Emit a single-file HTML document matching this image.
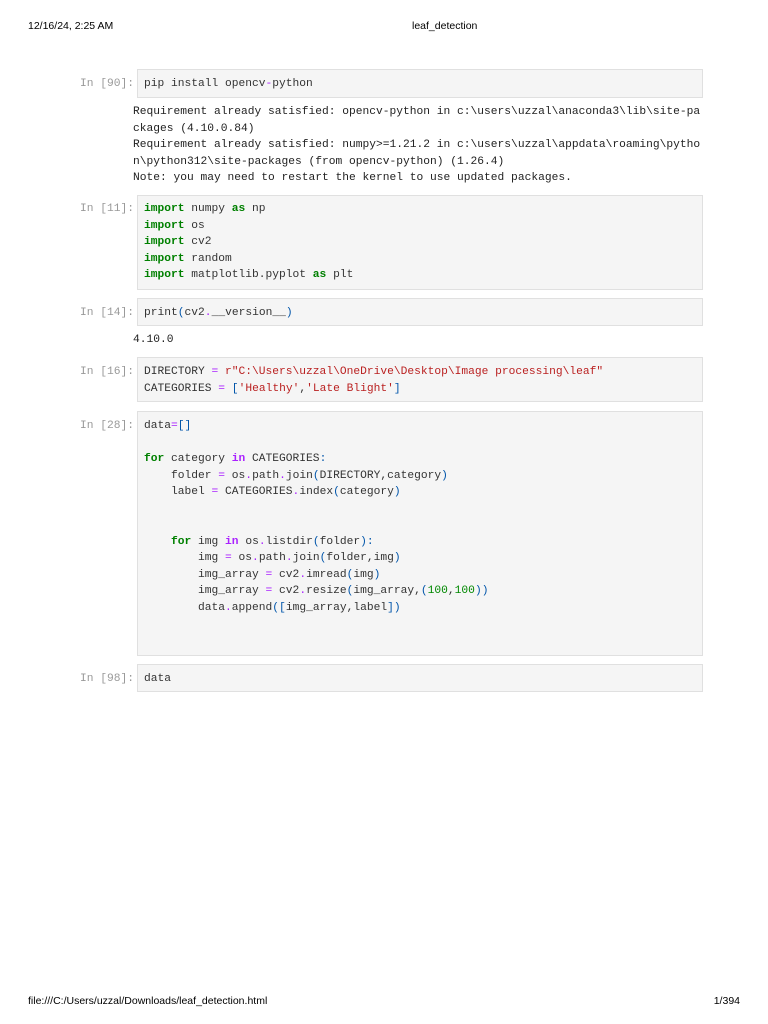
<!DOCTYPE html>
<html><head><meta charset="utf-8"><style>
body{margin:0;width:768px;height:1024px;background:#fff;position:relative;font-family:"Liberation Sans",sans-serif;}
.hd{position:absolute;font-size:10.5px;color:#000;}
.p{position:absolute;left:60px;width:74px;text-align:right;font-family:"Liberation Mono",monospace;font-size:11.25px;color:#999;line-height:16.5px;}
.c{position:absolute;left:137px;width:566px;background:#f5f5f5;border:1px solid #e0e0e0;box-sizing:border-box;}
pre{margin:0;font-family:"Liberation Mono",monospace;font-size:11.25px;line-height:16.5px;color:#333;white-space:pre;}
.c pre{position:absolute;left:6px;}
.o{position:absolute;left:133px;color:#222}
.k{color:#008000;font-weight:bold}
.m{color:#aa22ff}
.s{color:#ba2121}
.b{color:#0055aa}
.n{color:#080}
</style></head><body>
<div class="hd" style="left:28px;top:20px">12/16/24, 2:25 AM</div>
<div class="hd" style="left:412px;top:20px">leaf_detection</div>
<div class="hd" style="left:28px;top:995px">file:///C:/Users/uzzal/Downloads/leaf_detection.html</div>
<div class="hd" style="right:28px;top:995px">1/394</div>

<div class="p" style="top:76px">In [90]:</div>
<div class="c" style="top:69px;height:29px"><pre style="top:6px">pip install opencv<span class="m">-</span>python</pre></div>
<pre class="o" style="top:104px">Requirement already satisfied: opencv-python in c:\users\uzzal\anaconda3\lib\site-pa
ckages (4.10.0.84)
Requirement already satisfied: numpy>=1.21.2 in c:\users\uzzal\appdata\roaming\pytho
n\python312\site-packages (from opencv-python) (1.26.4)
Note: you may need to restart the kernel to use updated packages.</pre>

<div class="p" style="top:201px">In [11]:</div>
<div class="c" style="top:195px;height:95px"><pre style="top:5px"><span class="k">import</span> numpy <span class="k">as</span> np
<span class="k">import</span> os
<span class="k">import</span> cv2
<span class="k">import</span> random
<span class="k">import</span> matplotlib.pyplot <span class="k">as</span> plt</pre></div>

<div class="p" style="top:305px">In [14]:</div>
<div class="c" style="top:298px;height:28px"><pre style="top:6px">print<span class="b">(</span>cv2<span class="m">.</span>__version__<span class="b">)</span></pre></div>
<pre class="o" style="top:332px">4.10.0</pre>

<div class="p" style="top:364px">In [16]:</div>
<div class="c" style="top:357px;height:45px"><pre style="top:6px">DIRECTORY <span class="m">=</span> <span class="s">r"C:\Users\uzzal\OneDrive\Desktop\Image processing\leaf"</span>
CATEGORIES <span class="m">=</span> <span class="b">[</span><span class="s">'Healthy'</span>,<span class="s">'Late Blight'</span><span class="b">]</span></pre></div>

<div class="p" style="top:418px">In [28]:</div>
<div class="c" style="top:411px;height:245px"><pre style="top:6px">data<span class="m">=</span><span class="b">[]</span>

<span class="k">for</span> category <span class="k" style="color:#aa22ff">in</span> CATEGORIES<span class="b">:</span>
    folder <span class="m">=</span> os<span class="m">.</span>path<span class="m">.</span>join<span class="b">(</span>DIRECTORY,category<span class="b">)</span>
    label <span class="m">=</span> CATEGORIES<span class="m">.</span>index<span class="b">(</span>category<span class="b">)</span>


    <span class="k">for</span> img <span class="k" style="color:#aa22ff">in</span> os<span class="m">.</span>listdir<span class="b">(</span>folder<span class="b">):</span>
        img <span class="m">=</span> os<span class="m">.</span>path<span class="m">.</span>join<span class="b">(</span>folder,img<span class="b">)</span>
        img_array <span class="m">=</span> cv2<span class="m">.</span>imread<span class="b">(</span>img<span class="b">)</span>
        img_array <span class="m">=</span> cv2<span class="m">.</span>resize<span class="b">(</span>img_array,<span class="b">(</span><span class="n">100</span>,<span class="n">100</span><span class="b">))</span>
        data<span class="m">.</span>append<span class="b">([</span>img_array,label<span class="b">])</span></pre></div>

<div class="p" style="top:671px">In [98]:</div>
<div class="c" style="top:664px;height:28px"><pre style="top:6px">data</pre></div>
</body></html>
